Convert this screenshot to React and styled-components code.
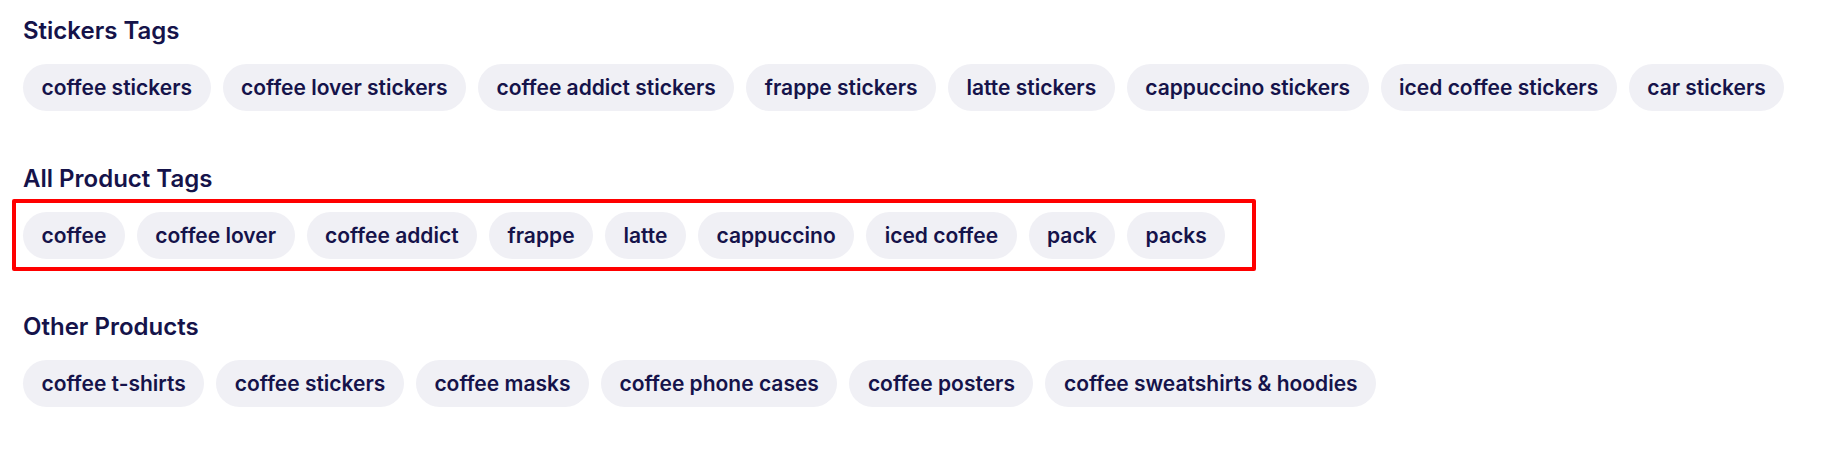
import React from 'react';
import styled, { createGlobalStyle } from 'styled-components';

const GlobalStyle = createGlobalStyle`
  body {
    margin: 0;
    background: #fff;
    font-family: Inter, "Noto Sans", sans-serif;
  }
`;

const Page = styled.div`
  display: flex;
  flex-direction: column;
  gap: 54px;
  padding: 17px 23px;
`;

const Section = styled.section`
  display: flex;
  flex-direction: column;
  gap: 19px;
`;

const Heading = styled.h3`
  margin: 0;
  font-size: 24px;
  line-height: 28px;
  font-weight: 600;
  color: #15134a;
`;

const TagList = styled.div`
  position: relative;
  display: flex;
  flex-wrap: wrap;
  gap: 12px;
  width: fit-content;

  ${({ $highlighted }) => $highlighted && `
    &::after {
      content: '';
      position: absolute;
      top: -13px;
      bottom: -12px;
      left: -11px;
      right: -31px;
      border: 4px solid #ff0000;
      border-radius: 2px;
      pointer-events: none;
    }
  `}
`;

const Tag = styled.a`
  display: inline-flex;
  align-items: center;
  height: 47px;
  padding: 0 18.5px;
  border-radius: 24px;
  background: #f0f0f5;
  color: #15134a;
  font-size: 21px;
  font-weight: 600;
  text-decoration: none;
  white-space: nowrap;
`;

const sections = [
  {
    title: 'Stickers Tags',
    tags: [
      'coffee stickers',
      'coffee lover stickers',
      'coffee addict stickers',
      'frappe stickers',
      'latte stickers',
      'cappuccino stickers',
      'iced coffee stickers',
      'car stickers',
    ],
  },
  {
    title: 'All Product Tags',
    highlighted: true,
    tags: ['coffee', 'coffee lover', 'coffee addict', 'frappe', 'latte', 'cappuccino', 'iced coffee', 'pack', 'packs'],
  },
  {
    title: 'Other Products',
    tags: [
      'coffee t-shirts',
      'coffee stickers',
      'coffee masks',
      'coffee phone cases',
      'coffee posters',
      'coffee sweatshirts & hoodies',
    ],
  },
];

export default function App() {
  return (
    <>
      <GlobalStyle />
      <Page>
        {sections.map((s) => (
          <Section key={s.title}>
            <Heading>{s.title}</Heading>
            <TagList $highlighted={s.highlighted}>
              {s.tags.map((t) => (
                <Tag key={t} href="#">{t}</Tag>
              ))}
            </TagList>
          </Section>
        ))}
      </Page>
    </>
  );
}
